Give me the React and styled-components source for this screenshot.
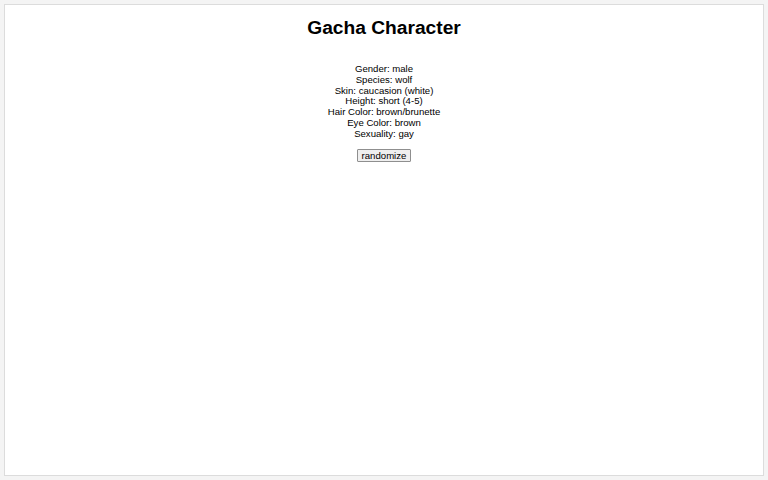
import React, { useState } from 'react';
import styled, { createGlobalStyle } from 'styled-components';

const GlobalStyle = createGlobalStyle`
	html, body {
		margin: 0;
		background-color: #f4f4f4;
	}
	body {
		padding: 4px;
		font-family: "Liberation Sans", Arial, sans-serif;
		color: #000;
	}
`;

const Page = styled.div`
	height: 472px;
	box-sizing: border-box;
	background-color: #fff;
	border: 1px solid #dcdcdc;
	display: flex;
	flex-direction: column;
	align-items: center;
	padding-top: 12px;
`;

const Title = styled.h1`
	margin: 0 0 25px 0;
	font-size: 19.2px;
	font-weight: bold;
	line-height: 22px;
`;

const Traits = styled.div`
	display: flex;
	flex-direction: column;
	align-items: center;
	font-size: 9.6px;
	line-height: 10.8px;
`;

const Trait = styled.div`
	white-space: nowrap;
`;

const Button = styled.button`
	margin-top: 9px;
	height: 13px;
	padding: 0 4px;
	font-family: "Liberation Sans", Arial, sans-serif;
	font-size: 9.6px;
	line-height: 11px;
	color: #000;
	background-color: #efefef;
	border: 1px solid #8f8f8f;
	border-radius: 1px;
	cursor: pointer;
`;

const options = {
	Gender: ['male', 'female', 'nonbinary'],
	Species: ['wolf', 'fox', 'cat', 'dragon', 'rabbit'],
	Skin: ['caucasion (white)', 'tan', 'dark', 'pale'],
	Height: ['short (4-5)', 'average (5-6)', 'tall (6-7)'],
	'Hair Color': ['brown/brunette', 'blonde', 'black', 'red'],
	'Eye Color': ['brown', 'blue', 'green', 'hazel'],
	Sexuality: ['gay', 'straight', 'bi', 'pan'],
};

const initial = {
	Gender: 'male',
	Species: 'wolf',
	Skin: 'caucasion (white)',
	Height: 'short (4-5)',
	'Hair Color': 'brown/brunette',
	'Eye Color': 'brown',
	Sexuality: 'gay',
};

const pick = (list) => list[Math.floor(Math.random() * list.length)];

export default function App() {
	const [character, setCharacter] = useState(initial);

	const randomize = () => {
		const next = {};
		Object.keys(options).forEach((key) => {
			next[key] = pick(options[key]);
		});
		setCharacter(next);
	};

	return (
		<>
			<GlobalStyle />
			<Page>
				<Title>Gacha Character</Title>
				<Traits>
					{Object.keys(character).map((key) => (
						<Trait key={key}>
							{key}: {character[key]}
						</Trait>
					))}
				</Traits>
				<Button onClick={randomize}>randomize</Button>
			</Page>
		</>
	);
}
